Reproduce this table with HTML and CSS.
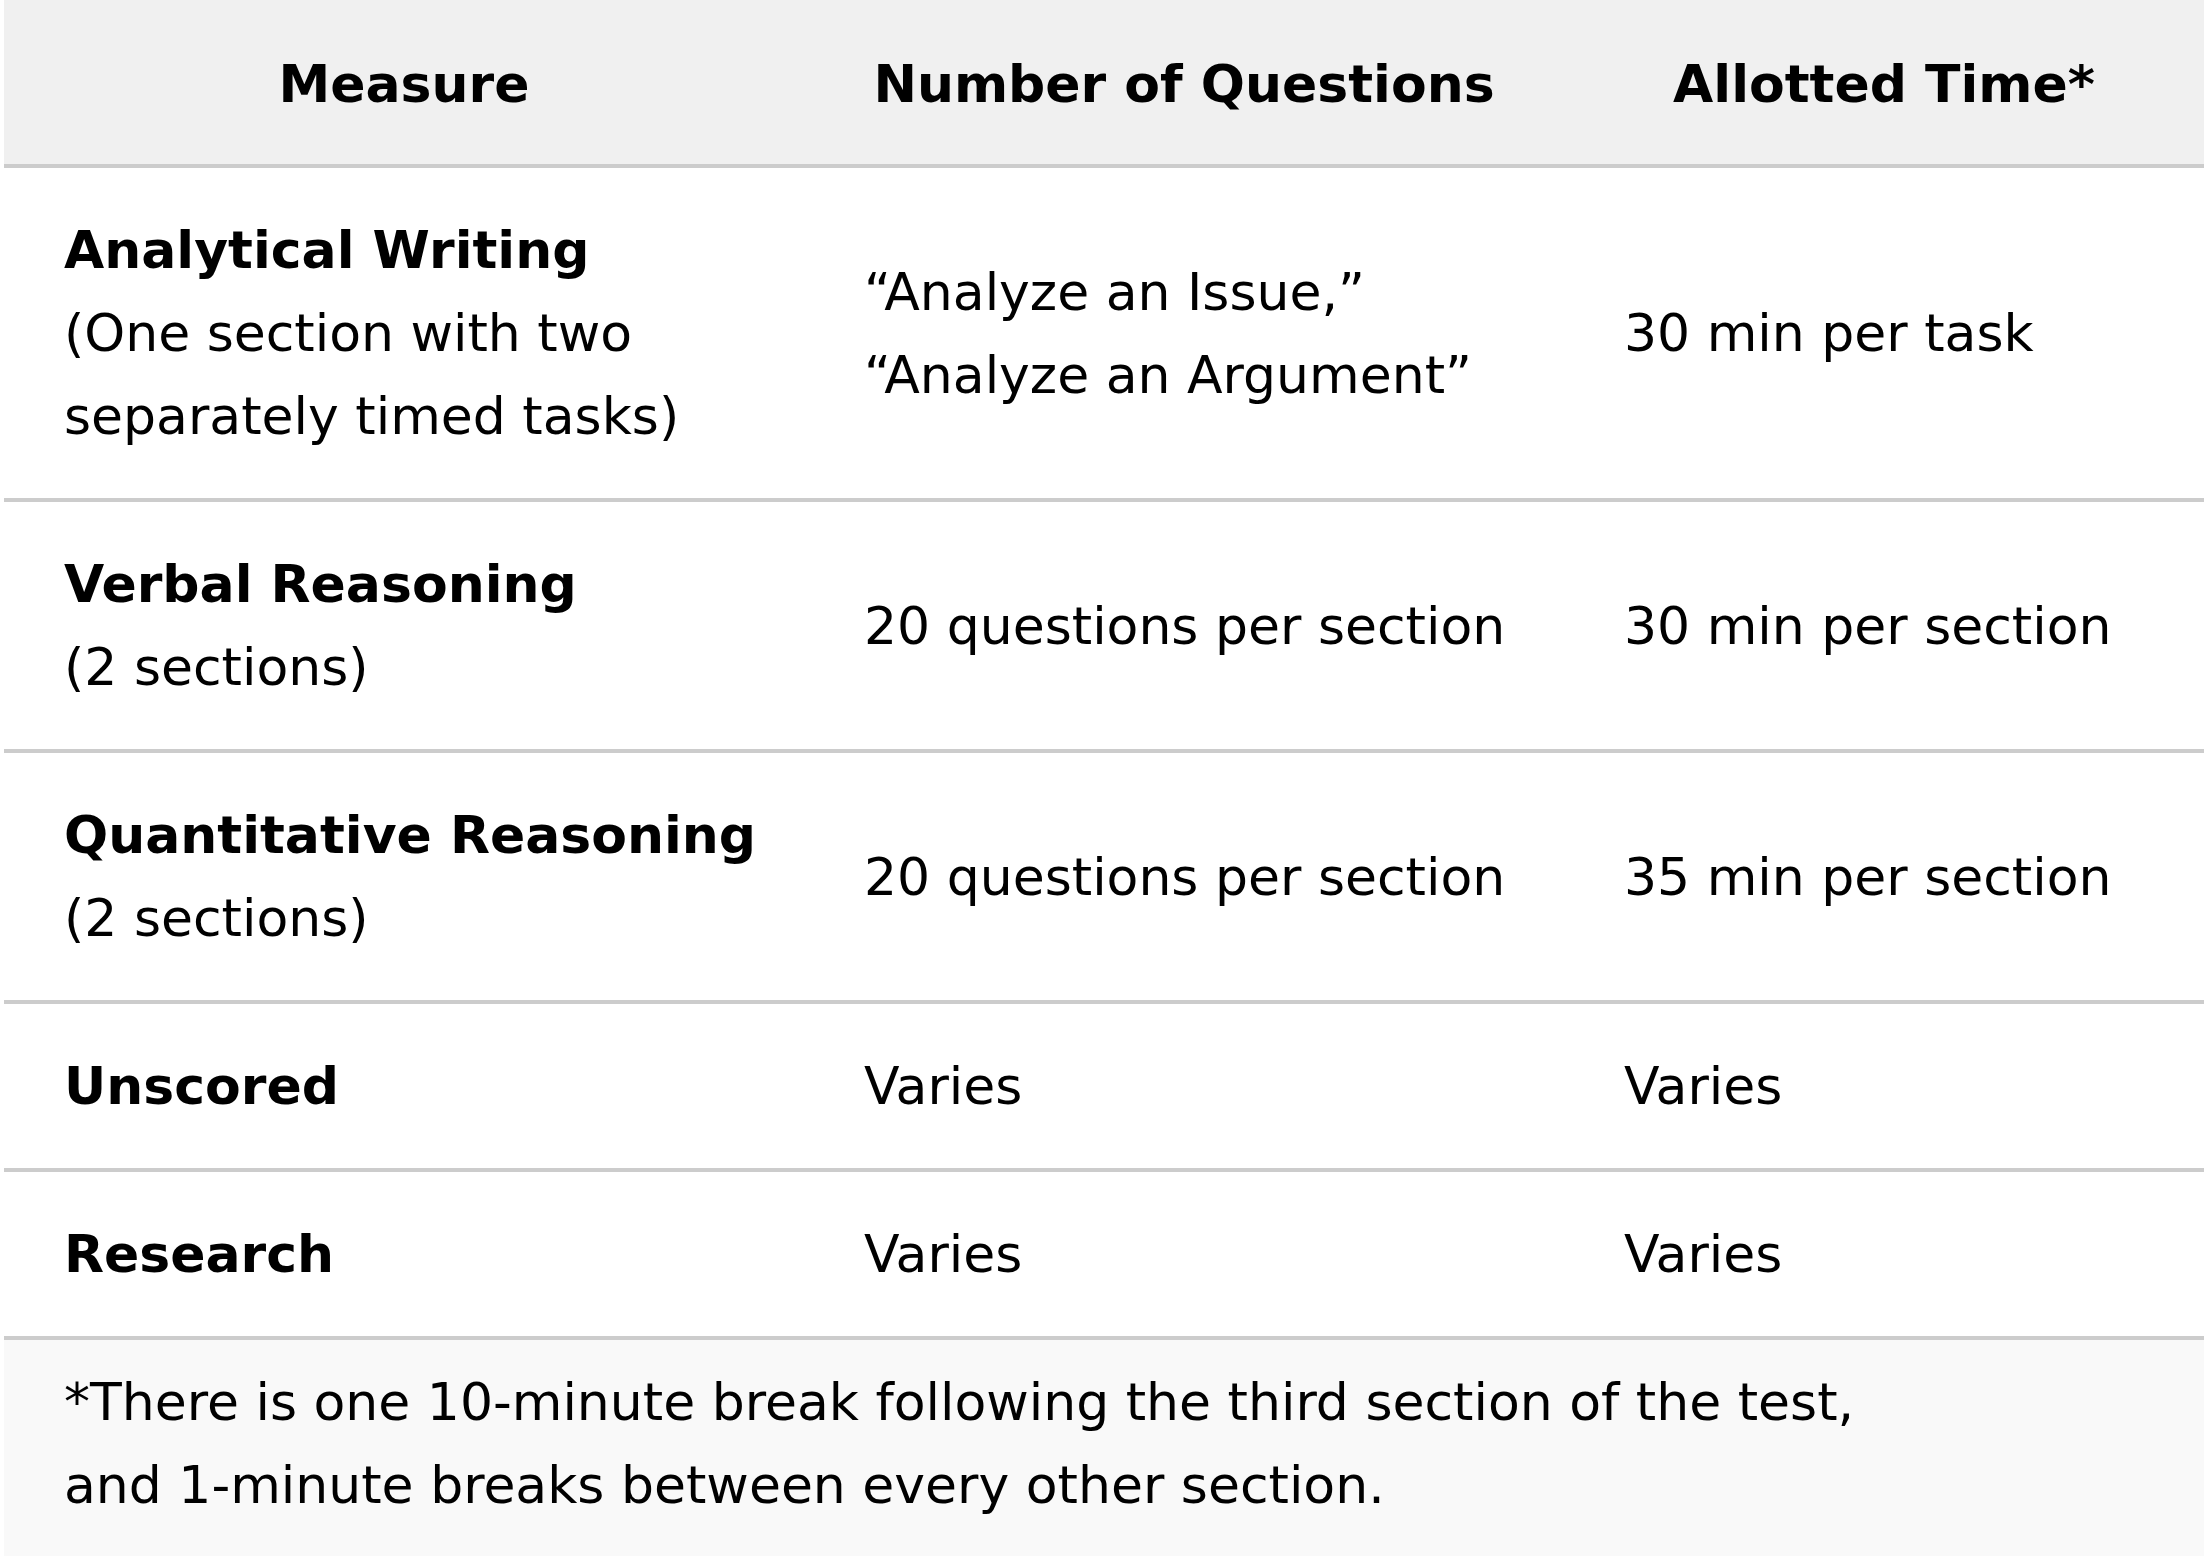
FILE: index.html
```html
<!DOCTYPE html>
<html lang="en">
<head>
<meta charset="utf-8">
<title>GRE Test Structure</title>
<link rel="stylesheet" href="styles.css">
</head>
<body>
<table class="gre-table">
  <colgroup>
    <col class="col-measure">
    <col class="col-questions">
    <col class="col-time">
  </colgroup>
  <thead>
    <tr>
      <th>Measure</th>
      <th>Number of Questions</th>
      <th>Allotted Time*</th>
    </tr>
  </thead>
  <tbody>
    <tr>
      <td><strong>Analytical Writing</strong><br>(One section with two<br>separately timed tasks)</td>
      <td>“Analyze an Issue,”<br>“Analyze an Argument”</td>
      <td>30 min per task</td>
    </tr>
    <tr>
      <td><strong>Verbal Reasoning</strong><br>(2 sections)</td>
      <td>20 questions per section</td>
      <td>30 min per section</td>
    </tr>
    <tr>
      <td><strong>Quantitative Reasoning</strong><br>(2 sections)</td>
      <td>20 questions per section</td>
      <td>35 min per section</td>
    </tr>
    <tr>
      <td><strong>Unscored</strong></td>
      <td>Varies</td>
      <td>Varies</td>
    </tr>
    <tr>
      <td><strong>Research</strong></td>
      <td>Varies</td>
      <td>Varies</td>
    </tr>
  </tbody>
  <tfoot>
    <tr>
      <td colspan="3" class="note">*There is one 10-minute break following the third section of the test,<br>and 1-minute breaks between every other section.</td>
    </tr>
  </tfoot>
</table>
</body>
</html>
```

FILE: styles.css
```css
html, body {
  margin: 0;
  padding: 0;
  background: #ffffff;
}

body {
  font-family: Verdana, "DejaVu Sans", sans-serif;
  font-size: 52px;
  line-height: 83px;
  color: #000000;
}

.gre-table {
  margin: 0 4px;
  width: 2200px;
  table-layout: fixed;
  border-collapse: separate;
  border-spacing: 0;
}

.col-measure { width: 800px; }
.col-questions { width: 760px; }
.col-time { width: 640px; }

.gre-table th,
.gre-table td {
  padding: 41px 60px 40px 60px;
  vertical-align: middle;
  text-align: left;
  white-space: nowrap;
  border-bottom: 4px solid #cccccc;
}

.gre-table thead th {
  background: #f0f0f0;
  font-weight: bold;
  text-align: center;
  padding-top: 43px;
  padding-bottom: 38px;
}

.gre-table strong {
  font-weight: bold;
}

.gre-table tfoot td.note {
  background: #f9f9f9;
  border-bottom: none;
  padding: 21px 60px 33px 60px;
}
```
